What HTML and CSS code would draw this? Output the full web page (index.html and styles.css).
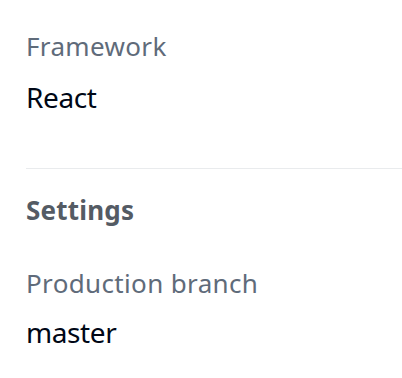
FILE: index.html
```html
<!DOCTYPE html>
<html lang="en">
<head>
    <meta charset="UTF-8">
    <meta name="viewport" content="width=device-width, initial-scale=1.0">
    <title>App settings</title>
    <link rel="stylesheet" href="styles.css">
</head>
<body>
    <div class="panel">
        <div class="field field-top">
            <div class="label">Framework</div>
            <div class="value">React</div>
        </div>

        <hr class="divider">

        <h2 class="heading">Settings</h2>
        <div class="field field-branch">
            <div class="label">Production branch</div>
            <div class="value">master</div>
        </div>
    </div>
</body>
</html>
```

FILE: styles.css
```css
body {
    margin: 0;
    font-family: "Noto Sans", "Open Sans", sans-serif;
    background-color: #ffffff;
}

.panel {
    padding: 28px 0 0 26px;
}

.field {
    display: flex;
    flex-direction: column;
}

.field-top {
    gap: 15px;
}

.field-branch {
    gap: 13px;
}

.label {
    font-size: 26px;
    line-height: 36px;
    letter-spacing: 0.35px;
    color: #5f6b7a;
}

.value {
    font-size: 28px;
    line-height: 36px;
    letter-spacing: -0.4px;
    color: #000716;
}

.divider {
    border: none;
    border-top: 1px solid #e9ebed;
    margin: 53px 0 23px;
}

.heading {
    margin: 0 0 37px;
    font-size: 26px;
    line-height: 36px;
    letter-spacing: 0.2px;
    font-weight: 700;
    color: #545b64;
}
```
